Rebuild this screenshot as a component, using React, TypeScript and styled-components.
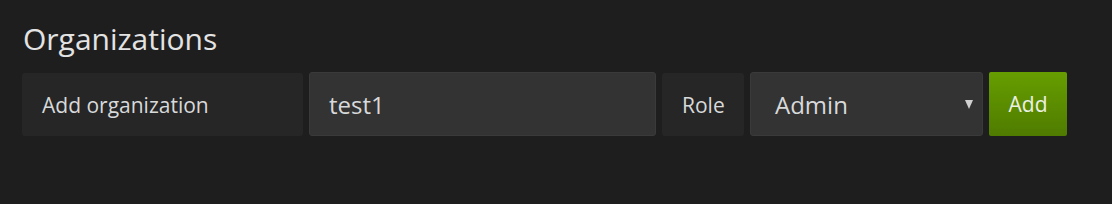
import React from "react";
import styled, { createGlobalStyle } from "styled-components";

const Global = createGlobalStyle`
  html, body { margin: 0; padding: 0; background: #1f1e1f; }
  body { font-family: "Open Sans", "Liberation Sans", sans-serif; color: #d8d9da; }
  * { box-sizing: border-box; }
`;

const Page = styled.div`
  padding: 18px 22px 0 22px;
  height: 204px;
`;

const Heading = styled.h3`
  margin: 0 0 13px 1px;
  font-size: 30px;
  font-weight: 400;
  line-height: 41px;
  color: #e3e3e3;
`;

const Form = styled.form`
  display: flex;
  gap: 6px;
  align-items: stretch;
  height: 64px;
`;

const Label = styled.div<{ $w: number }>`
  width: ${(p) => p.$w}px;
  display: flex;
  align-items: center;
  padding: 0 20px;
  background: #262626;
  border-radius: 3px;
  margin-top: 1px;
  font-size: 21px;
  color: #d8d9da;
`;

const Input = styled.input<{ $w: number }>`
  width: ${(p) => p.$w}px;
  background: #333333;
  border: 1px solid #3a3a3a;
  border-radius: 3px;
  padding: 0 19px;
  font-family: inherit;
  font-size: 24px;
  color: #d8d9da;
  outline: none;
`;

const SelectWrap = styled.div<{ $w: number }>`
  position: relative;
  width: ${(p) => p.$w}px;
  background: #333333;
  border: 1px solid #3a3a3a;
  border-radius: 3px;
  display: flex;
  align-items: center;
  padding: 0 24px;
  font-size: 24px;
  color: #d8d9da;
`;

const Caret = styled.span`
  position: absolute;
  right: 9px;
  top: 27px;
  width: 0;
  height: 0;
  border-left: 4.5px solid transparent;
  border-right: 4.5px solid transparent;
  border-top: 9px solid #d0d0d0;
`;

const Button = styled.button`
  width: 78px;
  border: none;
  border-radius: 2px;
  background: linear-gradient(to bottom, #679e00, #4f7b00);
  color: #ecf0e4;
  font-family: inherit;
  font-size: 21px;
  padding: 0;
  cursor: pointer;
`;

export default function App() {
  return (
    <>
      <Global />
      <Page>
        <Heading>Organizations</Heading>
        <Form onSubmit={(e) => e.preventDefault()}>
          <Label $w={281}>Add organization</Label>
          <Input $w={347} defaultValue="test1" />
          <Label $w={82}>Role</Label>
          <SelectWrap $w={233}>
            Admin
            <Caret />
          </SelectWrap>
          <Button type="submit">Add</Button>
        </Form>
      </Page>
    </>
  );
}
